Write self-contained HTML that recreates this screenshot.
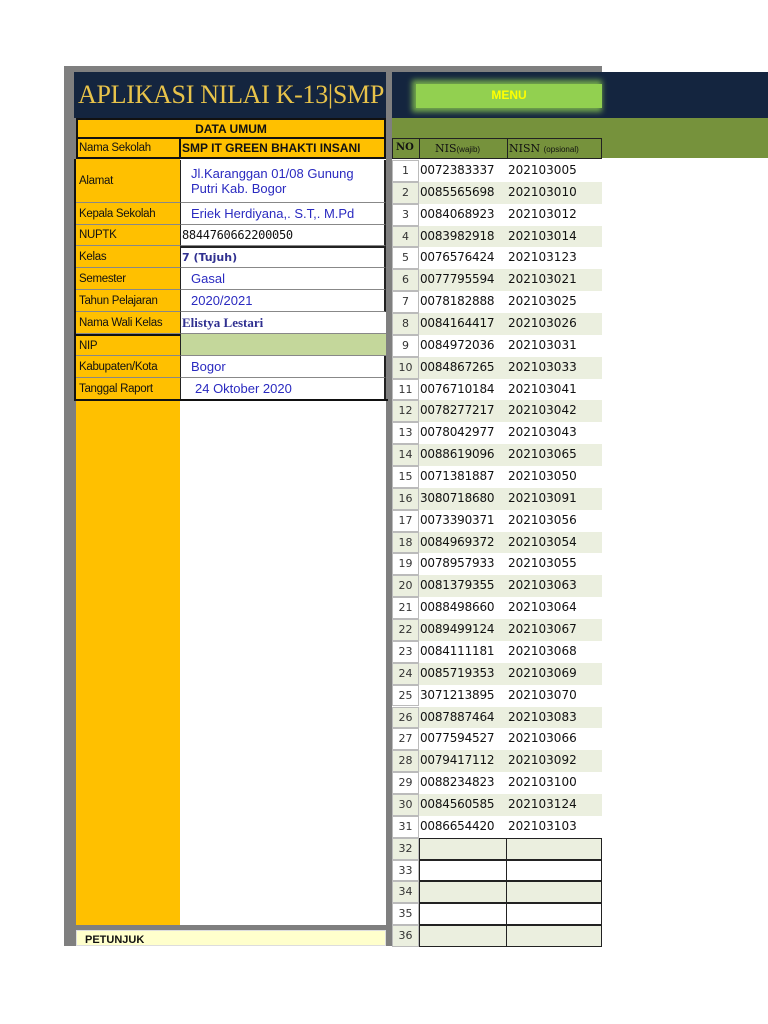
<!DOCTYPE html>
<html><head><meta charset="utf-8"><style>
*{margin:0;padding:0;box-sizing:border-box}
body{width:768px;height:1024px;background:#fff;position:relative;overflow:hidden;font-family:"Liberation Sans","DejaVu Sans",sans-serif}
.a{position:absolute}
.lbl{position:absolute;left:76px;width:104px;background:#ffc000;font-size:11.5px;color:#111;padding-left:3px;display:flex;align-items:center;border-bottom:1px solid #888;letter-spacing:-0.3px;white-space:nowrap}
.val{position:absolute;left:180px;width:206px;background:#fff;font-size:13px;color:#2a2ac0;display:flex;align-items:center;border-bottom:1px solid #888;border-left:1px solid #222;border-right:2px solid #222}
.row{position:absolute;left:392px;width:210px;height:21.86px;font-family:"DejaVu Sans",sans-serif;font-size:12px;color:#111}
.row .n{position:absolute;left:0;width:27px;height:100%;background:#fff;border:1px solid #bbb;text-align:center;font-size:11px;color:#333;line-height:20px}
.row .s{position:absolute;left:28px;top:0;line-height:21px;letter-spacing:-0.2px}
.row .t{position:absolute;left:116px;top:0;line-height:21px}
.alt{background:#ebefdf}
.alt .n{background:#ebefdf}
.emp .c1,.emp .c2{position:absolute;top:0;height:100%;border:1px solid #222}
</style></head><body>
<div class="a" style="left:64px;top:66px;width:538px;height:6px;background:#7f7f7f"></div>
<div class="a" style="left:64px;top:66px;width:12px;height:880px;background:#7f7f7f"></div>
<div class="a" style="left:386px;top:66px;width:6px;height:880px;background:#7f7f7f"></div>
<div class="a" style="left:74px;top:72px;width:312px;height:46px;background:#14253f"></div>
<div class="a" style="left:78px;top:80px;font-family:'Liberation Serif',serif;font-size:26px;color:#e8c34a;letter-spacing:-0.3px;white-space:nowrap">APLIKASI NILAI K-13|SMP</div>
<div class="a" style="left:392px;top:72px;width:376px;height:46px;background:#14253f"></div>
<div class="a" style="left:412px;top:80px;width:190px;height:32px;background:#9ce052;filter:blur(3px);opacity:.7"></div>
<div class="a" style="left:416px;top:84px;width:186px;height:24px;background:#92d050;color:#ffff00;font-weight:bold;font-size:12px;text-align:center;line-height:23px">MENU</div>
<div class="a" style="left:392px;top:118px;width:376px;height:40px;background:#76923c"></div>
<div class="a" style="left:392px;top:138px;width:210px;height:21px;border:1px solid #222;background:#76923c;font-family:'DejaVu Serif',serif;font-size:11px;color:#111">
<span class="a" style="left:3px;top:3px;font-weight:bold;font-size:10px">NO</span>
<span class="a" style="left:26px;top:-1px;width:1px;height:21px;background:#222"></span>
<span class="a" style="left:42px;top:3px">NIS<span style="font-size:8px;font-family:'Liberation Sans'">(wajib)</span></span>
<span class="a" style="left:114px;top:-1px;width:1px;height:21px;background:#222"></span>
<span class="a" style="left:116px;top:3px">NISN <span style="font-size:8px;font-family:'Liberation Sans'">(opsional)</span></span>
</div>
<div class="a" style="left:76px;top:118px;width:310px;height:808px;background:#fff"></div>
<div class="a" style="left:76px;top:118px;width:104px;height:808px;background:#ffc000"></div>
<div class="a" style="left:76px;top:118px;width:310px;height:21px;background:#ffc000;border:2px solid #111;font-weight:bold;font-size:12px;text-align:center;line-height:18px;color:#111">DATA UMUM</div>
<div class="a" style="left:76px;top:139px;width:310px;height:20px;background:#ffc000;border:2px solid #111;border-top:none"></div>
<div class="a" style="left:79px;top:142px;font-size:11.5px;color:#111;letter-spacing:-0.3px">Nama Sekolah</div>
<div class="a" style="left:179px;top:139px;width:2px;height:19px;background:#111"></div>
<div class="a" style="left:182px;top:141px;font-size:12px;font-weight:bold;color:#111;white-space:nowrap">SMP IT GREEN BHAKTI INSANI</div>
<div class="a" style="left:74px;top:159px;width:2px;height:242px;background:#111"></div>
<div class="lbl" style="top:160px;height:43px">Alamat</div>
<div class="val" style="top:160px;height:43px;line-height:15px;padding-left:10px">Jl.Karanggan 01/08 Gunung<br>Putri Kab. Bogor</div>
<div class="lbl" style="top:203px;height:22px">Kepala Sekolah</div>
<div class="val" style="top:203px;height:22px;padding-left:10px">Eriek Herdiyana,. S.T,. M.Pd</div>
<div class="lbl" style="top:225px;height:21px">NUPTK</div>
<div class="val" style="top:225px;height:21px;color:#111;font-family:'DejaVu Sans Mono',monospace;font-size:12px;padding-left:1px;letter-spacing:-0.3px">8844760662200050</div>
<div class="lbl" style="top:246px;height:22px">Kelas</div>
<div class="val" style="top:246px;height:22px;font-family:'DejaVu Sans';font-size:11px;font-weight:bold;color:#303090;padding-left:1px;border-top:2px solid #222">7 (Tujuh)</div>
<div class="lbl" style="top:268px;height:22px">Semester</div>
<div class="val" style="top:268px;height:22px;padding-left:10px">Gasal</div>
<div class="lbl" style="top:290px;height:22px">Tahun Pelajaran</div>
<div class="val" style="top:290px;height:22px;padding-left:10px">2020/2021</div>
<div class="lbl" style="top:312px;height:22px">Nama Wali Kelas</div>
<div class="val" style="top:312px;height:22px;font-family:'Liberation Serif',serif;font-weight:bold;color:#303090;padding-left:1px;border-right:none">Elistya Lestari</div>
<div class="lbl" style="top:334px;height:22px;border-top:2px solid #111">NIP</div>
<div class="val" style="top:334px;height:22px;background:#c4d79b;border-right:none"></div>
<div class="lbl" style="top:356px;height:22px">Kabupaten/Kota</div>
<div class="val" style="top:356px;height:22px;padding-left:10px">Bogor</div>
<div class="lbl" style="top:378px;height:22px">Tanggal Raport</div>
<div class="val" style="top:378px;height:22px;padding-left:14px">24 Oktober 2020</div>
<div class="a" style="left:74px;top:399px;width:314px;height:2px;background:#111"></div>
<div class="a" style="left:64px;top:925px;width:328px;height:21px;background:#7f7f7f"></div>
<div class="a" style="left:76px;top:930px;width:310px;height:16px;background:#ffffcc;border:1px solid #ddd;font-weight:bold;font-size:11px;color:#111;padding:3px 0 0 8px">PETUNJUK</div>
<div class="a" style="left:392px;top:160px;width:210px;height:790px">
<div class="row" style="left:0;top:0"><div class="n">1</div><div class="s">0072383337</div><div class="t">202103005</div></div>
<div class="row alt" style="left:0;top:21.86px"><div class="n">2</div><div class="s">0085565698</div><div class="t">202103010</div></div>
<div class="row" style="left:0;top:43.72px"><div class="n">3</div><div class="s">0084068923</div><div class="t">202103012</div></div>
<div class="row alt" style="left:0;top:65.58px"><div class="n">4</div><div class="s">0083982918</div><div class="t">202103014</div></div>
<div class="row" style="left:0;top:87.44px"><div class="n">5</div><div class="s">0076576424</div><div class="t">202103123</div></div>
<div class="row alt" style="left:0;top:109.3px"><div class="n">6</div><div class="s">0077795594</div><div class="t">202103021</div></div>
<div class="row" style="left:0;top:131.16px"><div class="n">7</div><div class="s">0078182888</div><div class="t">202103025</div></div>
<div class="row alt" style="left:0;top:153.02px"><div class="n">8</div><div class="s">0084164417</div><div class="t">202103026</div></div>
<div class="row" style="left:0;top:174.88px"><div class="n">9</div><div class="s">0084972036</div><div class="t">202103031</div></div>
<div class="row alt" style="left:0;top:196.74px"><div class="n">10</div><div class="s">0084867265</div><div class="t">202103033</div></div>
<div class="row" style="left:0;top:218.6px"><div class="n">11</div><div class="s">0076710184</div><div class="t">202103041</div></div>
<div class="row alt" style="left:0;top:240.46px"><div class="n">12</div><div class="s">0078277217</div><div class="t">202103042</div></div>
<div class="row" style="left:0;top:262.32px"><div class="n">13</div><div class="s">0078042977</div><div class="t">202103043</div></div>
<div class="row alt" style="left:0;top:284.18px"><div class="n">14</div><div class="s">0088619096</div><div class="t">202103065</div></div>
<div class="row" style="left:0;top:306.04px"><div class="n">15</div><div class="s">0071381887</div><div class="t">202103050</div></div>
<div class="row alt" style="left:0;top:327.9px"><div class="n">16</div><div class="s">3080718680</div><div class="t">202103091</div></div>
<div class="row" style="left:0;top:349.76px"><div class="n">17</div><div class="s">0073390371</div><div class="t">202103056</div></div>
<div class="row alt" style="left:0;top:371.62px"><div class="n">18</div><div class="s">0084969372</div><div class="t">202103054</div></div>
<div class="row" style="left:0;top:393.48px"><div class="n">19</div><div class="s">0078957933</div><div class="t">202103055</div></div>
<div class="row alt" style="left:0;top:415.34px"><div class="n">20</div><div class="s">0081379355</div><div class="t">202103063</div></div>
<div class="row" style="left:0;top:437.2px"><div class="n">21</div><div class="s">0088498660</div><div class="t">202103064</div></div>
<div class="row alt" style="left:0;top:459.06px"><div class="n">22</div><div class="s">0089499124</div><div class="t">202103067</div></div>
<div class="row" style="left:0;top:480.92px"><div class="n">23</div><div class="s">0084111181</div><div class="t">202103068</div></div>
<div class="row alt" style="left:0;top:502.78px"><div class="n">24</div><div class="s">0085719353</div><div class="t">202103069</div></div>
<div class="row" style="left:0;top:524.64px"><div class="n">25</div><div class="s">3071213895</div><div class="t">202103070</div></div>
<div class="row alt" style="left:0;top:546.5px"><div class="n">26</div><div class="s">0087887464</div><div class="t">202103083</div></div>
<div class="row" style="left:0;top:568.36px"><div class="n">27</div><div class="s">0077594527</div><div class="t">202103066</div></div>
<div class="row alt" style="left:0;top:590.22px"><div class="n">28</div><div class="s">0079417112</div><div class="t">202103092</div></div>
<div class="row" style="left:0;top:612.08px"><div class="n">29</div><div class="s">0088234823</div><div class="t">202103100</div></div>
<div class="row alt" style="left:0;top:633.94px"><div class="n">30</div><div class="s">0084560585</div><div class="t">202103124</div></div>
<div class="row" style="left:0;top:655.8px"><div class="n">31</div><div class="s">0086654420</div><div class="t">202103103</div></div>
<div class="row alt emp" style="left:0;top:677.66px"><div class="n">32</div><div class="c1" style="left:27px;width:88px"></div><div class="c2" style="left:114px;width:96px"></div></div>
<div class="row emp" style="left:0;top:699.52px"><div class="n">33</div><div class="c1" style="left:27px;width:88px"></div><div class="c2" style="left:114px;width:96px"></div></div>
<div class="row alt emp" style="left:0;top:721.38px"><div class="n">34</div><div class="c1" style="left:27px;width:88px"></div><div class="c2" style="left:114px;width:96px"></div></div>
<div class="row emp" style="left:0;top:743.24px"><div class="n">35</div><div class="c1" style="left:27px;width:88px"></div><div class="c2" style="left:114px;width:96px"></div></div>
<div class="row alt emp" style="left:0;top:765.1px"><div class="n">36</div><div class="c1" style="left:27px;width:88px"></div><div class="c2" style="left:114px;width:96px"></div></div>
</div>
</body></html>
